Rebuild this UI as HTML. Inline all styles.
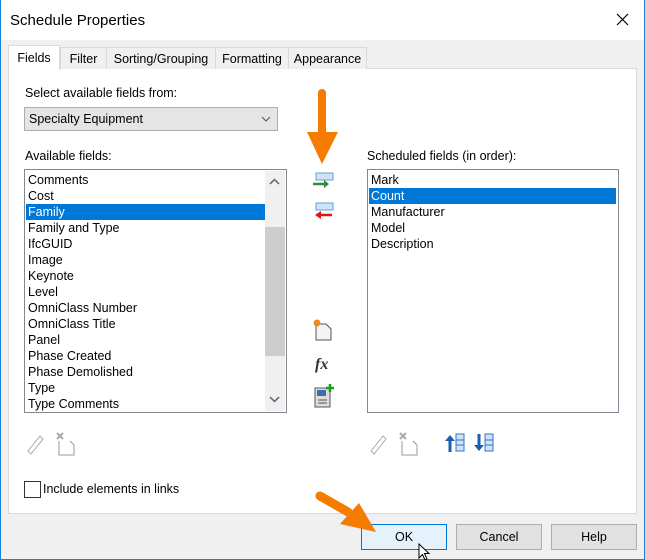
<!DOCTYPE html>
<html><head><style>
*{margin:0;padding:0;box-sizing:border-box}
body{width:645px;height:560px;overflow:hidden;background:#f0f0f0;font-family:"Liberation Sans",sans-serif;font-size:12px;color:#000;position:relative}
.a{position:absolute}
.win{left:0;top:0;width:645px;height:560px;border:1px solid #1883d7;border-top:none}
.title{left:1px;top:0;width:643px;height:40px;background:#fff}
.tab{top:47px;height:22px;border:1px solid #d9d9d9;border-bottom:none;background:#f0f0f0;text-align:center;line-height:22px;font-size:12.5px}
.panel{left:8px;top:68px;width:629px;height:446px;background:#fff;border:1px solid #d9d9d9}
.list{background:#fff;border:1px solid #828790}
.it{position:absolute;left:1px;height:16px;line-height:16px;padding-left:2px;font-size:12.5px}
.sel{background:#0078d7;color:#fff}
.btn{top:524px;width:86px;height:26px;border:1px solid #adadad;background:#e1e1e1;text-align:center;line-height:24px;font-size:12.5px}
</style></head><body>
<div class="a title"></div>
<div class="a" style="left:10px;top:12px;font-size:15px">Schedule Properties</div>
<svg class="a" style="left:616px;top:13px" width="13" height="13"><path d="M1 1L12 12M12 1L1 12" stroke="#000" stroke-width="1.2"/></svg>
<div class="a panel"></div>
<div class="a tab" style="left:60px;width:47px">Filter</div>
<div class="a tab" style="left:106px;width:110px">Sorting/Grouping</div>
<div class="a tab" style="left:215px;width:74px">Formatting</div>
<div class="a tab" style="left:288px;width:79px">Appearance</div>
<div class="a tab" style="left:8px;top:45px;width:52px;height:25px;background:#fff;line-height:24px">Fields</div>
<div class="a" style="left:25px;top:86px;font-size:12.5px">Select available fields from:</div>
<div class="a" style="left:24px;top:107px;width:254px;height:24px;background:#e5e5e5;border:1px solid #adadad;font-size:12.5px;line-height:22px;padding-left:4px">Specialty Equipment</div>
<svg class="a" style="left:261px;top:116px" width="10" height="6"><path d="M1 1L5 5L9 1" stroke="#555" fill="none"/></svg>
<div class="a" style="left:25px;top:149px;font-size:12.5px">Available fields:</div>
<div class="a" style="left:367px;top:149px;font-size:12.5px">Scheduled fields (in order):</div>
<div class="a list" style="left:24px;top:169px;width:263px;height:244px">
<div class="it" style="top:2px">Comments</div>
<div class="it" style="top:18px">Cost</div>
<div class="it sel" style="top:34px;width:239px">Family</div>
<div class="it" style="top:50px">Family and Type</div>
<div class="it" style="top:66px">IfcGUID</div>
<div class="it" style="top:82px">Image</div>
<div class="it" style="top:98px">Keynote</div>
<div class="it" style="top:114px">Level</div>
<div class="it" style="top:130px">OmniClass Number</div>
<div class="it" style="top:146px">OmniClass Title</div>
<div class="it" style="top:162px">Panel</div>
<div class="it" style="top:178px">Phase Created</div>
<div class="it" style="top:194px">Phase Demolished</div>
<div class="it" style="top:210px">Type</div>
<div class="it" style="top:226px">Type Comments</div>
<div class="a" style="left:240px;top:1px;width:20px;height:240px;background:#f0f0f0"></div>
<div class="a" style="left:240px;top:57px;width:20px;height:129px;background:#cdcdcd"></div>
<svg class="a" style="left:244px;top:8px" width="11" height="7"><path d="M1 6L5.5 1.5L10 6" stroke="#606060" stroke-width="1.5" fill="none"/></svg>
<svg class="a" style="left:244px;top:226px" width="11" height="7"><path d="M1 1L5.5 5.5L10 1" stroke="#606060" stroke-width="1.5" fill="none"/></svg>
</div>
<div class="a list" style="left:367px;top:169px;width:252px;height:244px">
<div class="it" style="top:2px">Mark</div>
<div class="it sel" style="top:18px;width:247px">Count</div>
<div class="it" style="top:34px">Manufacturer</div>
<div class="it" style="top:50px">Model</div>
<div class="it" style="top:66px">Description</div>
</div>
<svg class="a" style="left:312px;top:172px" width="22" height="60">
<rect x="4" y="1" width="17" height="7" fill="#cfe3f7" stroke="#6a9fd8"/>
<path d="M1 12H15" stroke="#2e8b3e" stroke-width="2.5"/><path d="M12 8L17 12L12 16Z" fill="#2e8b3e"/>
<rect x="4" y="31" width="17" height="7" fill="#cfe3f7" stroke="#6a9fd8"/>
<path d="M6 43H20" stroke="#e81010" stroke-width="2.5"/><path d="M9 39L3 43L9 47Z" fill="#e81010"/>
</svg>
<svg class="a" style="left:312px;top:318px" width="24" height="92">
<path d="M4 6H14L19 11V22H4Z" fill="#f4f4f4" stroke="#555"/><circle cx="5" cy="5" r="3.5" fill="#f08a20"/>
<text x="3" y="51" font-family="Liberation Serif,serif" font-style="italic" font-weight="bold" font-size="16" fill="#333">fx</text>
<rect x="3" y="70" width="15" height="19" fill="#ddd" stroke="#555"/><rect x="5" y="72" width="9" height="6" fill="#3b6db3"/><path d="M6 82H15M6 85H15" stroke="#555"/><path d="M18 66V74M14 70H22" stroke="#1aa01a" stroke-width="2.5"/>
</svg>
<svg class="a" style="left:25px;top:432px" width="55" height="24">
<path d="M3 19L15 4L18 7L6 22Z" fill="none" stroke="#aaa"/>
<path d="M34 9V23H49V13L45 9" fill="none" stroke="#999"/><path d="M32 1L38 7M38 1L32 7" stroke="#aaa" stroke-width="2"/>
</svg>
<svg class="a" style="left:368px;top:432px" width="55" height="24">
<path d="M3 19L15 4L18 7L6 22Z" fill="none" stroke="#aaa"/>
<path d="M34 9V23H49V13L45 9" fill="none" stroke="#999"/><path d="M32 1L38 7M38 1L32 7" stroke="#aaa" stroke-width="2"/>
</svg>
<svg class="a" style="left:444px;top:433px" width="52" height="20">
<path d="M6 19V7" stroke="#1a5fb0" stroke-width="3"/><path d="M1 8L6 2L11 8Z" fill="#1a5fb0"/>
<rect x="12" y="1" width="8" height="17" fill="#cfe3f7" stroke="#3a6fc0"/><path d="M12 7H20M12 12H20" stroke="#3a6fc0"/>
<path d="M35 1V13" stroke="#1a5fb0" stroke-width="3"/><path d="M30 12L35 18L40 12Z" fill="#1a5fb0"/>
<rect x="41" y="1" width="8" height="17" fill="#cfe3f7" stroke="#3a6fc0"/><path d="M41 7H49M41 12H49" stroke="#3a6fc0"/>
</svg>
<div class="a" style="left:24px;top:481px;width:17px;height:17px;border:1px solid #333;background:#fff"></div>
<div class="a" style="left:43px;top:482px;font-size:12.5px">Include elements in links</div>
<div class="a btn" style="left:361px;border-color:#0078d7;background:#e5f1fb">OK</div>
<div class="a btn" style="left:456px">Cancel</div>
<div class="a btn" style="left:551px">Help</div>
<div class="a win"></div>
<svg class="a" style="left:418px;top:543px" width="12" height="17"><path d="M1 1V15L4.5 11.5L7 17L9 16L6.5 10.5H11Z" fill="#fff" stroke="#000"/></svg>
<svg class="a" style="left:0;top:0" width="645" height="560">
<path d="M322 93V132" stroke="#f57c00" stroke-width="8" stroke-linecap="round"/>
<path d="M307 132H338L322 164Z" fill="#f57c00"/>
<path d="M320 496L348 512" stroke="#f57c00" stroke-width="9" stroke-linecap="round"/>
<path d="M340 524L359 503L376 532Z" fill="#f57c00"/>
</svg>
</body></html>
